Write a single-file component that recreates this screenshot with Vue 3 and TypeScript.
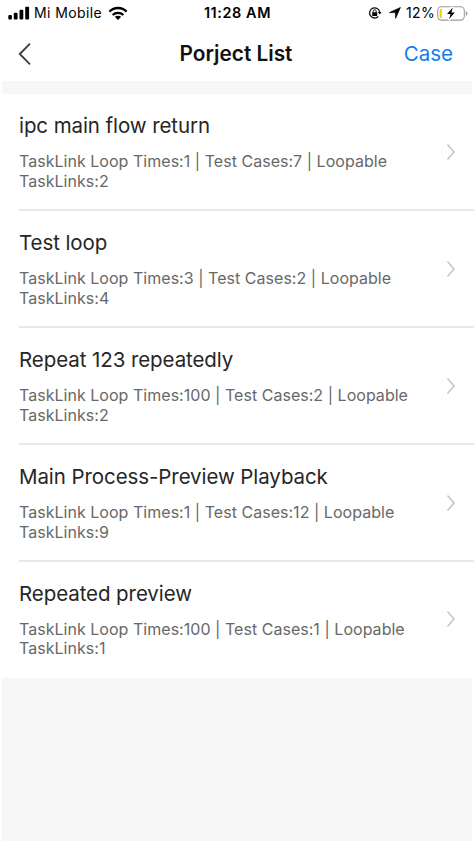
<script setup lang="ts">
interface Project {
  name: string
  loops: number
  cases: number
  links: number
}

const projects: Project[] = [
  { name: 'ipc main flow return', loops: 1, cases: 7, links: 2 },
  { name: 'Test loop', loops: 3, cases: 2, links: 4 },
  { name: 'Repeat 123 repeatedly', loops: 100, cases: 2, links: 2 },
  { name: 'Main Process-Preview Playback', loops: 1, cases: 12, links: 9 },
  { name: 'Repeated preview', loops: 100, cases: 1, links: 1 },
]
</script>

<template>
  <div class="screen">
    <div class="status">
      <div class="status-left">
        <svg class="signal" width="22" height="14" viewBox="0 0 22 14">
          <rect x="0.3" y="9" width="3.6" height="4.4" rx="1" />
          <rect x="5.8" y="6.8" width="3.8" height="6.6" rx="1" />
          <rect x="11.5" y="3.8" width="3.8" height="9.6" rx="1" />
          <rect x="17.2" y="0.8" width="3.9" height="12.6" rx="1" />
        </svg>
        <span class="carrier">Mi Mobile</span>
        <svg class="wifi" width="20" height="15" viewBox="0 0 20 15">
          <path d="M1.4 5.6C6.3 .8 13.7 .8 18.6 5.6M4.6 9C7.7 6.1 12.3 6.1 15.4 9" fill="none" stroke="#000" stroke-width="2.3" />
          <path d="M6.8 10.8C8.7 9.3 11.3 9.3 13.2 10.8L10 14Z" />
        </svg>
      </div>
      <span class="time">11:28 AM</span>
      <div class="status-right">
        <svg width="14" height="14" viewBox="0 0 14 14">
          <path d="M11.7 6.2A5.1 5.1 0 1 0 10.3 10.5" fill="none" stroke="#111" stroke-width="1.3" />
          <path d="M9.9 6H13.5L11.7 8.6Z" />
          <rect x="4.2" y="6.2" width="5" height="3.7" rx=".5" />
          <path d="M5.2 6.5V5.3a1.5 1.5 0 0 1 3 0V6.5" fill="none" stroke="#111" stroke-width="1" />
        </svg>
        <svg class="location" width="12" height="12" viewBox="0 0 12 12">
          <path d="M11.4 .5L6.6 11.3V5.6H.5Z" stroke="#000" stroke-width=".7" stroke-linejoin="round" />
        </svg>
        <span class="percent">12%</span>
        <svg class="battery" width="31" height="15" viewBox="0 0 31 15">
          <rect x=".7" y=".7" width="26.6" height="13.4" rx="3.8" fill="#fff" stroke="#9b9b9b" stroke-width="1.1" />
          <path d="M4.8 2.7V12H4.2A1.6 1.6 0 0 1 2.6 10.5V4.2A1.6 1.6 0 0 1 4.2 2.7Z" fill="#fc0" />
          <path d="M15.8 .8L9.6 8.2H13.2L11.8 14L18.2 6.3H14.6Z" stroke="#fff" stroke-width="2" />
          <path d="M15.8 1.6L10 8H13.5L12.1 13.2L17.8 6.5H14.4Z" />
          <path d="M28.8 5.1Q30.5 5.7 30.5 7.4T28.8 9.7Z" fill="#999" />
        </svg>
      </div>
    </div>

    <header class="nav">
      <button class="back" aria-label="Back">
        <svg width="14" height="24" viewBox="0 0 14 24">
          <path d="M12 1.7L1.8 12L12 22.3" fill="none" stroke="#404040" stroke-width="1.9" />
        </svg>
      </button>
      <h1>Porject List</h1>
      <button class="case">Case</button>
    </header>

    <main class="content">
      <ul class="list">
        <li v-for="project in projects" :key="project.name" class="item">
          <div class="text">
            <h2>{{ project.name }}</h2>
            <p>TaskLink Loop Times:{{ project.loops }} | Test Cases:{{ project.cases }} | Loopable TaskLinks:{{ project.links }}</p>
          </div>
          <svg class="chevron" width="10" height="18" viewBox="0 0 10 18">
            <path d="M1.5 1.5L8 9L1.5 16.5" fill="none" stroke="#c4c4c4" stroke-width="1.5" />
          </svg>
        </li>
      </ul>
    </main>
  </div>
</template>

<style>
body {
  margin: 0;
  background: #fff;
}
</style>

<style scoped>
.screen {
  box-sizing: border-box;
  width: 474px;
  height: 843px;
  padding-bottom: 2px;
  display: flex;
  flex-direction: column;
  overflow: hidden;
  background: #fff;
  color: #000;
  font-family: Inter, "Liberation Sans", sans-serif;
}
.status {
  height: 26px;
  display: grid;
  grid-template-columns: 1fr auto 1fr;
  align-items: center;
  padding: 0 6px 0 8px;
  font-size: 14px;
  line-height: 26px;
}
.status-left,
.status-right {
  display: flex;
  align-items: center;
}
.status-right {
  justify-content: flex-end;
}
.carrier {
  margin-left: 4px;
  letter-spacing: 0.4px;
}
.wifi {
  margin-left: 6px;
}
.time {
  font-weight: 600;
  font-size: 14.4px;
  letter-spacing: 0.6px;
  margin-right: 1px;
}
.location {
  margin-left: 7px;
}
.percent {
  margin-left: 5px;
  letter-spacing: 0.3px;
}
.battery {
  margin-left: 2px;
}
.nav {
  height: 55px;
  display: grid;
  grid-template-columns: 1fr auto 1fr;
  align-items: center;
  padding: 0 21px 0 18px;
}
button {
  border: 0;
  padding: 0;
  background: none;
  font-family: inherit;
}
.back {
  justify-self: start;
  display: flex;
}
h1 {
  margin: 0;
  padding-left: 1px;
  font-size: 20.8px;
  font-weight: 600;
  line-height: 28px;
  color: #111;
}
.case {
  justify-self: end;
  font-size: 20.5px;
  line-height: 28px;
  color: #117cf0;
}
.content {
  flex: 1;
  margin: 0 2px;
  padding-top: 13px;
  background: #f7f7f7;
}
.list {
  margin: 0 -2px;
  padding: 0 0 0 19px;
  list-style: none;
  background: #fff;
}
.item {
  box-sizing: border-box;
  height: 117px;
  display: flex;
  align-items: center;
  justify-content: space-between;
  padding-right: 18px;
  border-bottom: 2px solid #e8e8e8;
}
.item:last-child {
  height: 116px;
  border-bottom-color: transparent;
}
.text {
  width: 400px;
}
h2 {
  margin: 0 0 12px;
  font-size: 20.5px;
  font-weight: 400;
  line-height: 28px;
  letter-spacing: -0.08px;
  color: #262626;
}
p {
  margin: 0;
  font-size: 16px;
  line-height: 19.5px;
  letter-spacing: 0.03px;
  color: #686868;
}
</style>
